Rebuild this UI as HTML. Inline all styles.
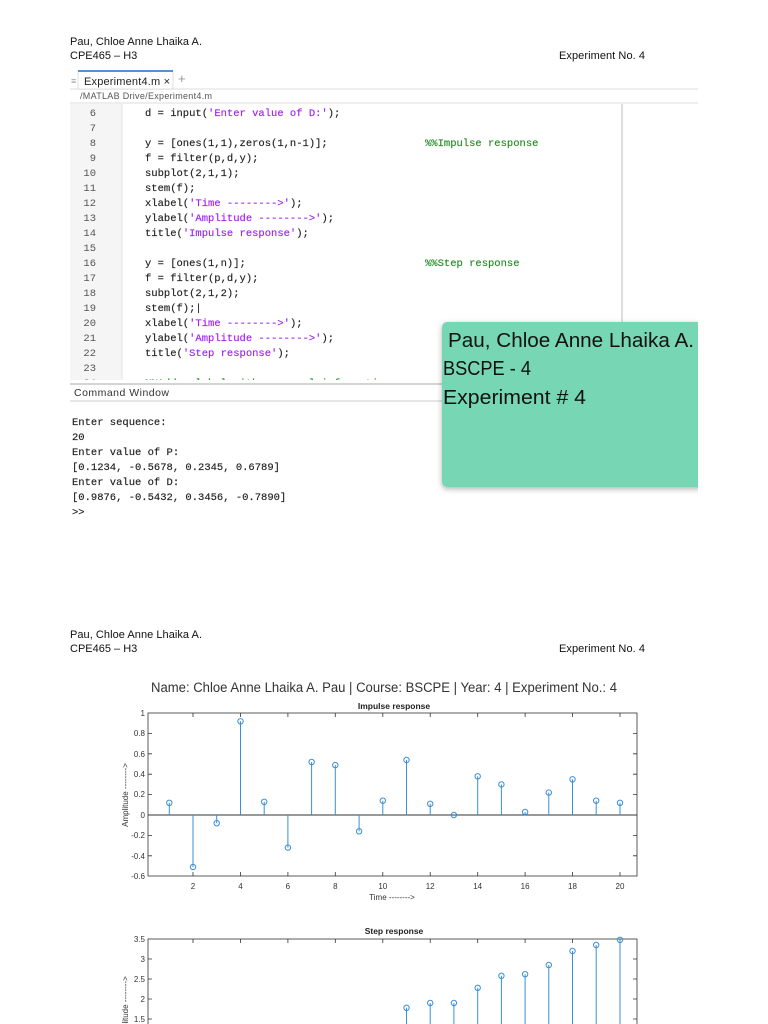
<!DOCTYPE html>
<html><head><meta charset="utf-8"><style>
html,body{margin:0;padding:0;background:#fff;width:768px;height:1024px;overflow:hidden}
svg{display:block}
.s{font-family:"Liberation Sans",sans-serif}
.m{font-family:"Liberation Mono",monospace;font-size:10.5px}
</style></head><body>
<svg width="768" height="1024" viewBox="0 0 768 1024" xmlns="http://www.w3.org/2000/svg" style="position:absolute;left:0;top:0">
<g class="s" font-size="11" fill="#111">
<text x="70" y="45" textLength="132">Pau, Chloe Anne Lhaika A.</text>
<text x="70" y="59">CPE465 – H3</text>
<text x="559" y="59" textLength="86">Experiment No. 4</text>
</g>
<rect x="70" y="70" width="628" height="445" fill="#fff"/>
<line x1="70" y1="89" x2="698" y2="89" stroke="#ddd"/>
<rect x="78" y="71" width="95" height="18" fill="#fff" stroke="#ccc" stroke-width="0.6"/>
<line x1="78" y1="71" x2="173" y2="71" stroke="#1f6fbf" stroke-width="1.5"/>
<text x="71" y="84" class="s" font-size="9" fill="#999">≡</text>
<text x="84" y="85" class="s" font-size="11" fill="#222" textLength="86">Experiment4.m ×</text>
<text x="178" y="83" class="s" font-size="13" fill="#999">+</text>
<text x="80" y="99" class="s" font-size="9" fill="#555" textLength="132">/MATLAB Drive/Experiment4.m</text>
<line x1="70" y1="103" x2="698" y2="103" stroke="#ddd"/>
<rect x="70" y="104" width="52" height="281" fill="#f5f5f5"/>
<line x1="122" y1="104" x2="122" y2="385" stroke="#e3e3e3"/>
<line x1="622" y1="104" x2="622" y2="385" stroke="#c8c8c8" stroke-width="1.2"/>
<g class="m" fill="#555" text-anchor="end">
<text x="96" y="116">6</text><text x="96" y="131">7</text><text x="96" y="146">8</text><text x="96" y="161">9</text>
<text x="96" y="176">10</text><text x="96" y="191">11</text><text x="96" y="206">12</text><text x="96" y="221">13</text>
<text x="96" y="236">14</text><text x="96" y="251">15</text><text x="96" y="266">16</text><text x="96" y="281">17</text>
<text x="96" y="296">18</text><text x="96" y="311">19</text><text x="96" y="326">20</text><text x="96" y="341">21</text>
<text x="96" y="356">22</text><text x="96" y="371">23</text><text x="96" y="386">24</text>
</g>
<g class="m" fill="#222" stroke="#222" stroke-width="0.15" xml:space="preserve">
<text x="145" y="116">d = input(<tspan fill="#a020f0" stroke="#a020f0">'Enter value of D:'</tspan>);</text>
<text x="145" y="146">y = [ones(1,1),zeros(1,n-1)];</text>
<text x="145" y="161">f = filter(p,d,y);</text>
<text x="145" y="176">subplot(2,1,1);</text>
<text x="145" y="191">stem(f);</text>
<text x="145" y="206">xlabel(<tspan fill="#a020f0" stroke="#a020f0">'Time --------&gt;'</tspan>);</text>
<text x="145" y="221">ylabel(<tspan fill="#a020f0" stroke="#a020f0">'Amplitude --------&gt;'</tspan>);</text>
<text x="145" y="236">title(<tspan fill="#a020f0" stroke="#a020f0">'Impulse response'</tspan>);</text>
<text x="145" y="266">y = [ones(1,n)];</text>
<text x="145" y="281">f = filter(p,d,y);</text>
<text x="145" y="296">subplot(2,1,2);</text>
<text x="145" y="311">stem(f);|</text>
<text x="145" y="326">xlabel(<tspan fill="#a020f0" stroke="#a020f0">'Time --------&gt;'</tspan>);</text>
<text x="145" y="341">ylabel(<tspan fill="#a020f0" stroke="#a020f0">'Amplitude --------&gt;'</tspan>);</text>
<text x="145" y="356">title(<tspan fill="#a020f0" stroke="#a020f0">'Step response'</tspan>);</text>
<text x="145" y="386" fill="#228b22" stroke="#228b22">%%Add a label with personal information</text>
<text x="425" y="146" fill="#228b22" stroke="#228b22">%%Impulse response</text>
<text x="425" y="266" fill="#228b22" stroke="#228b22">%%Step response</text>
</g>
<rect x="70" y="380" width="628" height="20" fill="#fff"/>
<line x1="70" y1="384" x2="698" y2="384" stroke="#bbb" stroke-width="1.2"/>
<text x="74" y="396" class="s" font-size="10.5" fill="#333" textLength="95">Command Window</text>
<line x1="70" y1="401" x2="698" y2="401" stroke="#ccc"/>
<g class="m" fill="#222" stroke="#222" stroke-width="0.15">
<text x="72" y="425">Enter sequence:</text>
<text x="72" y="440">20</text>
<text x="72" y="455">Enter value of P:</text>
<text x="72" y="470">[0.1234, -0.5678, 0.2345, 0.6789]</text>
<text x="72" y="485">Enter value of D:</text>
<text x="72" y="500">[0.9876, -0.5432, 0.3456, -0.7890]</text>
<text x="72" y="515">&gt;&gt;</text>
</g>
<defs><filter id="sh" x="-10%" y="-10%" width="120%" height="130%"><feDropShadow dx="0" dy="2" stdDeviation="3" flood-opacity="0.3"/></filter></defs>
<rect x="442" y="322" width="270" height="165" rx="5" fill="#77d6b3" filter="url(#sh)"/>
<rect x="698" y="300" width="70" height="220" fill="#fff"/>
<g font-family="'Liberation Sans',sans-serif" font-size="20" fill="#111">
<text x="448" y="347" textLength="246" lengthAdjust="spacingAndGlyphs">Pau, Chloe Anne Lhaika A.</text>
<text x="443" y="375" textLength="88" lengthAdjust="spacingAndGlyphs">BSCPE - 4</text>
<text x="443" y="404" textLength="143" lengthAdjust="spacingAndGlyphs">Experiment # 4</text>
</g>

<g class="s" font-size="11" fill="#111">
<text x="70" y="638" textLength="132">Pau, Chloe Anne Lhaika A.</text>
<text x="70" y="652">CPE465 – H3</text>
<text x="559" y="652" textLength="86">Experiment No. 4</text>
</g>
<text x="151" y="692" class="s" font-size="13.5" fill="#333" textLength="466" lengthAdjust="spacingAndGlyphs">Name: Chloe Anne Lhaika A. Pau | Course: BSCPE | Year: 4 | Experiment No.: 4</text>
<text x="394" y="709" class="s" font-size="8.5" font-weight="bold" fill="#222" text-anchor="middle">Impulse response</text>
<rect x="148" y="713" width="489" height="163" fill="#fff" stroke="#333" stroke-width="0.8"/>
<line x1="148" y1="815" x2="637" y2="815" stroke="#333" stroke-width="1"/>
<g stroke="#333" stroke-width="0.8">
<path d="M193 713v4M240.5 713v4M287.9 713v4M335.3 713v4M382.8 713v4M430.2 713v4M477.7 713v4M525.1 713v4M572.5 713v4M620 713v4M193 876v-4M240.5 876v-4M287.9 876v-4M335.3 876v-4M382.8 876v-4M430.2 876v-4M477.7 876v-4M525.1 876v-4M572.5 876v-4M620 876v-4"/>
<path d="M148 733.4h4M148 753.8h4M148 774.2h4M148 794.6h4M148 835.4h4M148 855.8h4M637 733.4h-4M637 753.8h-4M637 774.2h-4M637 794.6h-4M637 835.4h-4M637 855.8h-4"/>
</g>
<g class="s" font-size="8" fill="#333" text-anchor="end">
<text x="145" y="716">1</text><text x="145" y="736">0.8</text><text x="145" y="757">0.6</text><text x="145" y="777">0.4</text>
<text x="145" y="797">0.2</text><text x="145" y="818">0</text><text x="145" y="838">-0.2</text><text x="145" y="859">-0.4</text><text x="145" y="879">-0.6</text>
</g>
<g class="s" font-size="8" fill="#333" text-anchor="middle">
<text x="193" y="889">2</text><text x="240.5" y="889">4</text><text x="287.9" y="889">6</text><text x="335.3" y="889">8</text><text x="382.8" y="889">10</text>
<text x="430.2" y="889">12</text><text x="477.7" y="889">14</text><text x="525.1" y="889">16</text><text x="572.5" y="889">18</text><text x="620" y="889">20</text>
<text x="392" y="900">Time --------&gt;</text>
<text transform="translate(128,795) rotate(-90)">Amplitude --------&gt;</text>
</g>
<g stroke="#3a8fd6" stroke-width="1" fill="none">
<path d="M169.3 815V802.8M193 815V867M216.7 815V823.2M240.5 815V721.3M264.2 815V801.8M287.9 815V847.6M311.6 815V762M335.3 815V765.1M359.1 815V831.3M382.8 815V800.7M406.5 815V760M430.2 815V803.8M477.7 815V776.3M501.4 815V784.4M525.1 815V812M548.8 815V792.6M572.5 815V779.3M596.2 815V800.7M620 815V802.8"/>
<circle cx="169.3" cy="802.8" r="2.7"/><circle cx="193" cy="867" r="2.7"/><circle cx="216.7" cy="823.2" r="2.7"/><circle cx="240.5" cy="721.3" r="2.7"/>
<circle cx="264.2" cy="801.8" r="2.7"/><circle cx="287.9" cy="847.6" r="2.7"/><circle cx="311.6" cy="762" r="2.7"/><circle cx="335.3" cy="765.1" r="2.7"/>
<circle cx="359.1" cy="831.3" r="2.7"/><circle cx="382.8" cy="800.7" r="2.7"/><circle cx="406.5" cy="760" r="2.7"/><circle cx="430.2" cy="803.8" r="2.7"/>
<circle cx="453.9" cy="815" r="2.7"/><circle cx="477.7" cy="776.3" r="2.7"/><circle cx="501.4" cy="784.4" r="2.7"/><circle cx="525.1" cy="812" r="2.7"/>
<circle cx="548.8" cy="792.6" r="2.7"/><circle cx="572.5" cy="779.3" r="2.7"/><circle cx="596.2" cy="800.7" r="2.7"/><circle cx="620" cy="802.8" r="2.7"/>
</g>
<text x="394" y="934" class="s" font-size="8.5" font-weight="bold" fill="#222" text-anchor="middle">Step response</text>
<rect x="148" y="939" width="489" height="200" fill="#fff" stroke="#333" stroke-width="0.8"/>
<g stroke="#333" stroke-width="0.8">
<path d="M193 939v4M240.5 939v4M287.9 939v4M335.3 939v4M382.8 939v4M430.2 939v4M477.7 939v4M525.1 939v4M572.5 939v4M620 939v4"/>
<path d="M148 959h4M148 979h4M148 999h4M148 1019h4M637 959h-4M637 979h-4M637 999h-4M637 1019h-4"/>
</g>
<g class="s" font-size="8" fill="#333" text-anchor="end">
<text x="145" y="942">3.5</text><text x="145" y="962">3</text><text x="145" y="982">2.5</text><text x="145" y="1002">2</text><text x="145" y="1022">1.5</text>
</g>
<text transform="translate(128,1040) rotate(-90)" class="s" font-size="8" fill="#333">Amplitude --------&gt;</text>
<g stroke="#3a8fd6" stroke-width="1" fill="none">
<path d="M406.5 1079V1007.8M430.2 1079V1003M453.9 1079V1003M477.7 1079V987.8M501.4 1079V975.8M525.1 1079V974.2M548.8 1079V965M572.5 1079V951M596.2 1079V945M620 1079V939.8"/>
<circle cx="406.5" cy="1007.8" r="2.7"/><circle cx="430.2" cy="1003" r="2.7"/><circle cx="453.9" cy="1003" r="2.7"/><circle cx="477.7" cy="987.8" r="2.7"/>
<circle cx="501.4" cy="975.8" r="2.7"/><circle cx="525.1" cy="974.2" r="2.7"/><circle cx="548.8" cy="965" r="2.7"/><circle cx="572.5" cy="951" r="2.7"/>
<circle cx="596.2" cy="945" r="2.7"/><circle cx="620" cy="939.8" r="2.7"/>
</g>
</svg>
</body></html>
